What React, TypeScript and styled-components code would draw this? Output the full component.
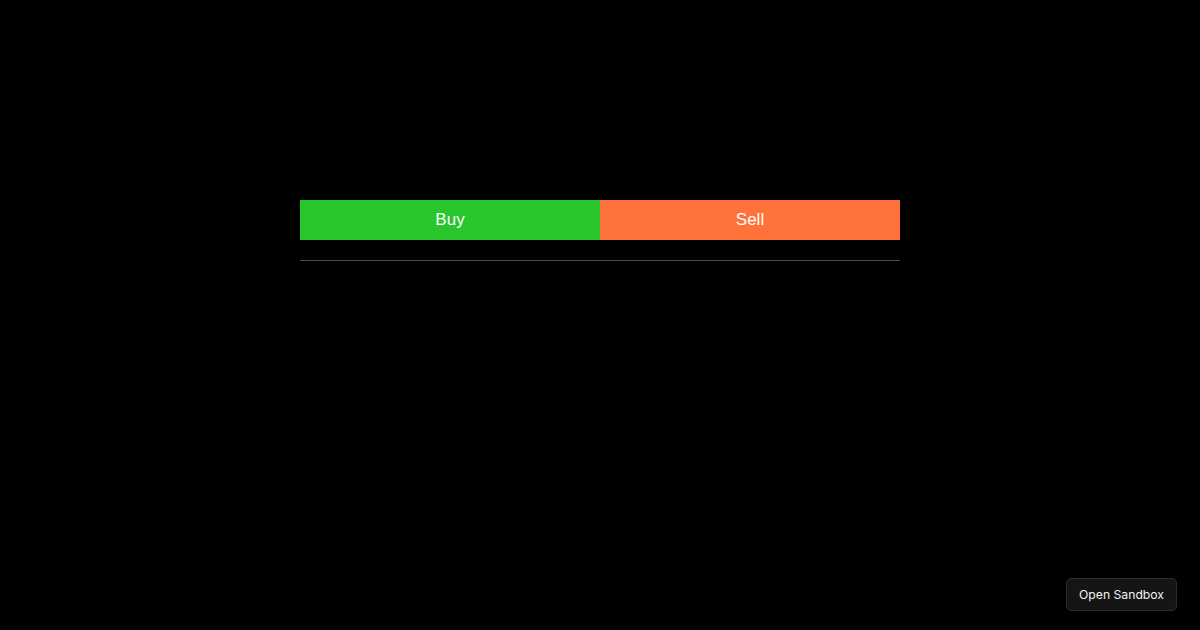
import styled, { createGlobalStyle } from "styled-components";

const GlobalStyle = createGlobalStyle`
  html, body {
    margin: 0;
    padding: 0;
    background: #000000;
    height: 100%;
  }
  #root {
    min-height: 100vh;
  }
`;

const Page = styled.div`
  min-height: 100vh;
  background: #000000;
  display: flex;
  justify-content: center;
  padding-top: 200px;
  box-sizing: border-box;
`;

const Panel = styled.div`
  width: 600px;
  display: flex;
  flex-direction: column;
`;

const Tabs = styled.div`
  display: flex;
  height: 40px;
`;

const Tab = styled.button<{ $color: string }>`
  flex: 1;
  border: 0;
  margin: 0;
  padding: 0;
  background: ${(p) => p.$color};
  color: #ffffff;
  font-family: "Liberation Sans", Arial, sans-serif;
  font-size: 17px;
  cursor: pointer;
`;

const Divider = styled.hr`
  margin: 20px 0 0;
  border: 0;
  border-top: 1px solid #4a4a4a;
  height: 0;
`;

const SandboxButton = styled.a`
  position: fixed;
  right: 23px;
  bottom: 19px;
  height: 33px;
  padding: 0 12px;
  display: flex;
  align-items: center;
  box-sizing: border-box;
  background: #151515;
  border: 1px solid #2b2b2b;
  border-radius: 5px;
  color: #f2f2f2;
  font-family: Inter, "Liberation Sans", sans-serif;
  font-size: 12.2px;
  text-decoration: none;
`;

export default function App() {
  return (
    <>
      <GlobalStyle />
      <Page>
        <Panel>
          <Tabs>
            <Tab $color="#28c62c">Buy</Tab>
            <Tab $color="#ff723a">Sell</Tab>
          </Tabs>
          <Divider />
        </Panel>
      </Page>
      <SandboxButton href="#">Open Sandbox</SandboxButton>
    </>
  );
}
